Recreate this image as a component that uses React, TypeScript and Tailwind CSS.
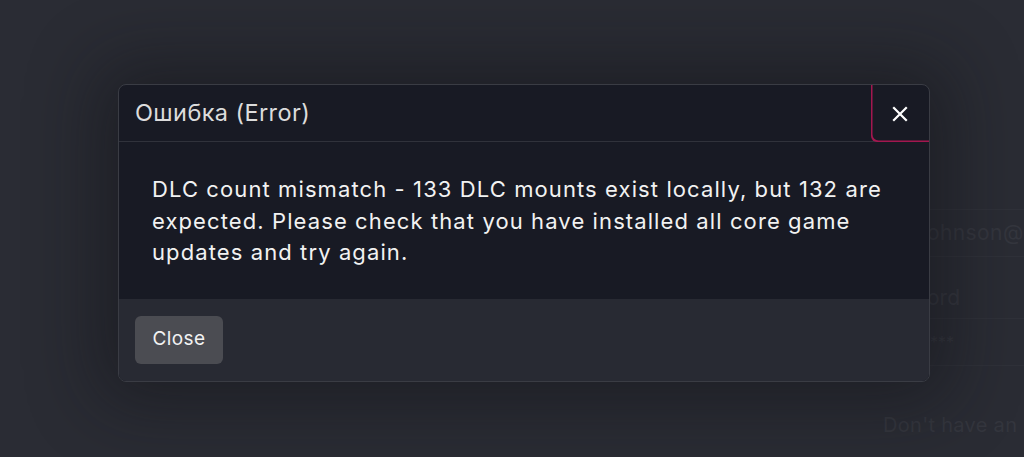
import React from 'react';

const font = { fontFamily: 'Inter, "Noto Sans", "Liberation Sans", sans-serif' };

// Faint login form sitting behind the dialog overlay
const BackgroundForm: React.FC = () => (
  <div className="flex h-full w-full justify-end">
    <div className="flex w-[160px] flex-col pt-[209px] text-[#34363e]">
      <div className="flex h-[48px] items-center border-y border-[#2f3139] pl-[63px] text-[21px] tracking-[0.4px] whitespace-nowrap">
        ohnson@email.com
      </div>
      <div className="flex h-[61px] items-end pb-[5px] pl-[63px] text-[21px]">ord</div>
      <div className="flex h-[48px] items-center border-y border-[#2f3139] pl-[66px] text-[16px]">***</div>
      <div className="mt-[44px] pl-[19px] text-[20px] tracking-[0.3px] whitespace-nowrap">Don't have an</div>
    </div>
  </div>
);

const ErrorModal: React.FC = () => (
  <div className="w-[812px] overflow-hidden rounded-[8px] border border-[#3a3c44] bg-[#181a24] shadow-[0_0_70px_20px_rgba(15,15,20,0.45)]">
    <div className="flex h-[57px] border-b border-[#30323b]">
      <h5 className="flex flex-1 items-center pl-[16px] text-[23.5px] tracking-[0.4px] text-[#dcdcdc]">Ошибка (Error)</h5>
      <div className="relative w-[58px]">
        {/* focus ring on the close button */}
        <button className="absolute inset-x-0 top-0 -bottom-px flex items-center justify-center rounded-bl-[6px] shadow-[inset_1.5px_-1.5px_0_0_#a3174f]">
          <svg width="16" height="16" viewBox="0 0 16 16" fill="none" stroke="#ffffff" strokeWidth="2.2" strokeLinecap="square">
            <path d="M2 2L14 14M14 2L2 14" />
          </svg>
        </button>
      </div>
    </div>
    <div className="px-[33px] pt-[32px] pb-[30px] text-[22px] leading-[31.5px] tracking-[1.1px] text-[#f2f2f2]">
      DLC count mismatch - 133 DLC mounts exist locally, but 132 are expected. Please check that you have installed all core game updates and try again.
    </div>
    <div className="flex bg-[#282a33] px-[16px] pt-[17px] pb-[17px]">
      <button className="h-[48px] w-[88px] rounded-[6px] bg-[#4b4c52] text-[19px] tracking-[0.4px] text-[#f2f2f2]">Close</button>
    </div>
  </div>
);

const App: React.FC = () => {
  return (
    <div className="relative h-[457px] w-[1024px] overflow-hidden bg-[#2a2c34]" style={font}>
      <BackgroundForm />
      <div className="absolute inset-0 flex items-start justify-center pt-[84px] pl-[24px]">
        <ErrorModal />
      </div>
    </div>
  );
};

export default App;
